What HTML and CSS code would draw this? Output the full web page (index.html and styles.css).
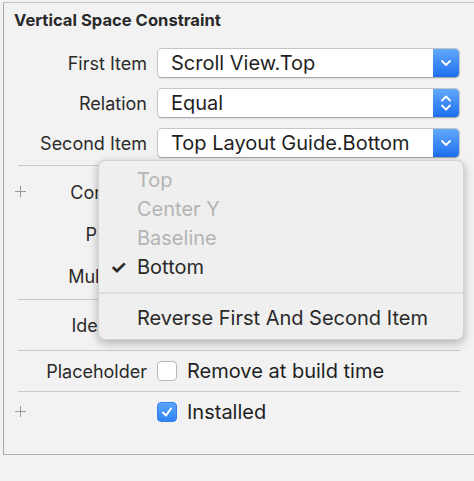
FILE: index.html
```html
<!DOCTYPE html>
<html>
<head>
<meta charset="utf-8">
<link rel="stylesheet" href="styles.css">
</head>
<body>
<div class="panel">
  <div class="title">Vertical Space Constraint</div>

  <div class="row r-top">
    <div class="label">First Item</div>
    <div class="popup">
      <span class="ptext">Scroll View.Top</span>
      <span class="pbtn"><svg width="12" height="8" viewBox="0 0 12 8"><path d="M2 2 L6 6 L10 2" fill="none" stroke="#fff" stroke-width="1.8" stroke-linecap="round" stroke-linejoin="round"/></svg></span>
    </div>
  </div>
  <div class="row r-top">
    <div class="label">Relation</div>
    <div class="popup">
      <span class="ptext">Equal</span>
      <span class="pbtn"><svg width="12" height="20" viewBox="0 0 12 20"><path d="M2 7.5 L6 3.5 L10 7.5 M2 12.5 L6 16.5 L10 12.5" fill="none" stroke="#fff" stroke-width="1.8" stroke-linecap="round" stroke-linejoin="round"/></svg></span>
    </div>
  </div>
  <div class="row r-top">
    <div class="label">Second Item</div>
    <div class="popup">
      <span class="ptext">Top Layout Guide.Bottom</span>
      <span class="pbtn"><svg width="12" height="8" viewBox="0 0 12 8"><path d="M2 2 L6 6 L10 2" fill="none" stroke="#fff" stroke-width="1.8" stroke-linecap="round" stroke-linejoin="round"/></svg></span>
    </div>
  </div>

  <div class="sep sep-a"></div>

  <div class="group-mid">
    <div class="row r-mid">
      <span class="plus"><svg width="11" height="11" viewBox="0 0 11 11"><path d="M5.5 0 V11 M0 5.5 H11" stroke="#9a9a9a" stroke-width="1"/></svg></span>
      <div class="label">Constant</div>
      <div class="field"></div>
    </div>
    <div class="row r-mid">
      <div class="label">Priority</div>
      <div class="field"></div>
    </div>
    <div class="row r-mid">
      <div class="label">Multiplier</div>
      <div class="field"></div>
    </div>
  </div>

  <div class="sep"></div>

  <div class="row r-id">
    <div class="label">Identifier</div>
    <div class="field"></div>
  </div>

  <div class="sep"></div>

  <div class="row r-check">
    <div class="label">Placeholder</div>
    <div class="checkline"><span class="cb"></span><span>Remove at build time</span></div>
  </div>

  <div class="sep"></div>

  <div class="row r-check">
    <span class="plus"><svg width="11" height="11" viewBox="0 0 11 11"><path d="M5.5 0 V11 M0 5.5 H11" stroke="#9a9a9a" stroke-width="1"/></svg></span>
    <div class="label"></div>
    <div class="checkline"><span class="cb on"><svg width="14" height="14" viewBox="0 0 14 14"><path d="M3 7.5 L6 10.5 L11 3.5" fill="none" stroke="#fff" stroke-width="2" stroke-linecap="round" stroke-linejoin="round"/></svg></span><span>Installed</span></div>
  </div>

  <div class="menu">
    <div class="mi dis">Top</div>
    <div class="mi dis">Center Y</div>
    <div class="mi dis">Baseline</div>
    <div class="mi"><span class="check">✓</span>Bottom</div>
    <div class="msep"></div>
    <div class="mi mi-rev">Reverse First And Second Item</div>
  </div>
</div>
</body>
</html>
```

FILE: styles.css
```css
html, body {
  margin: 0;
  padding: 0;
  background: #f2f2f2;
  width: 474px;
  height: 481px;
  overflow: hidden;
}
body {
  font-family: Inter, "Liberation Sans", sans-serif;
  font-size: 18px;
  color: #262626;
}
.panel {
  position: relative;
  margin: 2px 0 0 3px;
  height: 451px;
  border-left: 1px solid #a8a8a8;
  border-top: 1px solid #c4c4c4;
  border-bottom: 1px solid #b0b0b0;
  background: #f2f2f2;
}
.title {
  height: 40px;
  line-height: 35px;
  padding-left: 10px;
  font-weight: 700;
  font-size: 16.6px;
  color: #2a2a2a;
}
.row {
  position: relative;
  display: grid;
  grid-template-columns: 143px 303px;
  column-gap: 10px;
  align-items: center;
}
.r-top { height: 40px; }
.r-mid { height: 42px; }
.r-id { height: 50px; }
.r-check { height: 40px; }
.sep-a { margin-top: 2px; }
.group-mid { padding: 5px 0 2px; }
.sep {
  height: 1px;
  background: #c9c9c9;
  margin-left: 14px;
  width: 442px;
}
.label {
  text-align: right;
  white-space: nowrap;
  color: #2b2b2b;
}
.plus {
  position: absolute;
  left: 11px;
  top: 50%;
  margin-top: -6px;
  line-height: 0;
}
.popup {
  height: 28px;
  background: #fff;
  border: 1px solid #c6c6c6;
  border-bottom-color: #a9a9a9;
  border-radius: 5px;
  box-shadow: 0 1px 1px rgba(0,0,0,0.08);
  display: flex;
  align-items: center;
  overflow: hidden;
}
.ptext {
  flex: 1;
  padding-left: 13px;
  font-size: 20px;
  color: #1f1f1f;
  white-space: nowrap;
}
.pbtn {
  width: 26px;
  height: 28px;
  background: linear-gradient(#62a9fb, #1d6ef0);
  display: flex;
  align-items: center;
  justify-content: center;
}
.field {
  height: 26px;
  background: #fff;
  border: 1px solid #bdbdbd;
  border-radius: 2px;
}
.checkline {
  display: flex;
  align-items: center;
  gap: 10px;
  font-size: 20px;
  color: #1f1f1f;
}
.cb {
  width: 18px;
  height: 18px;
  background: #fff;
  border: 1px solid #b9b9b9;
  border-radius: 4px;
  display: flex;
  align-items: center;
  justify-content: center;
}
.cb.on {
  background: linear-gradient(#5aa4fa, #2f83f4);
  border-color: #3380ec;
}
.menu {
  position: absolute;
  left: 94px;
  top: 157px;
  width: 364px;
  padding: 5px 0 6px;
  background: #efefef;
  border: 1px solid rgba(0,0,0,0.12);
  border-radius: 7px;
  box-shadow: 0 3px 10px rgba(0,0,0,0.28);
  font-size: 20px;
}
.mi {
  position: relative;
  height: 29px;
  line-height: 29px;
  padding-left: 38px;
  color: #2a2a2a;
  white-space: nowrap;
}
.mi.dis { color: #b4b4b4; }
.check {
  position: absolute;
  left: 11px;
  top: 0;
  font-size: 19px;
  font-weight: 700;
  color: #2a2a2a;
}
.msep {
  height: 2px;
  background: #dedede;
  margin: 10px 0 9px;
}
.mi-rev { height: 30px; line-height: 30px; }
```
